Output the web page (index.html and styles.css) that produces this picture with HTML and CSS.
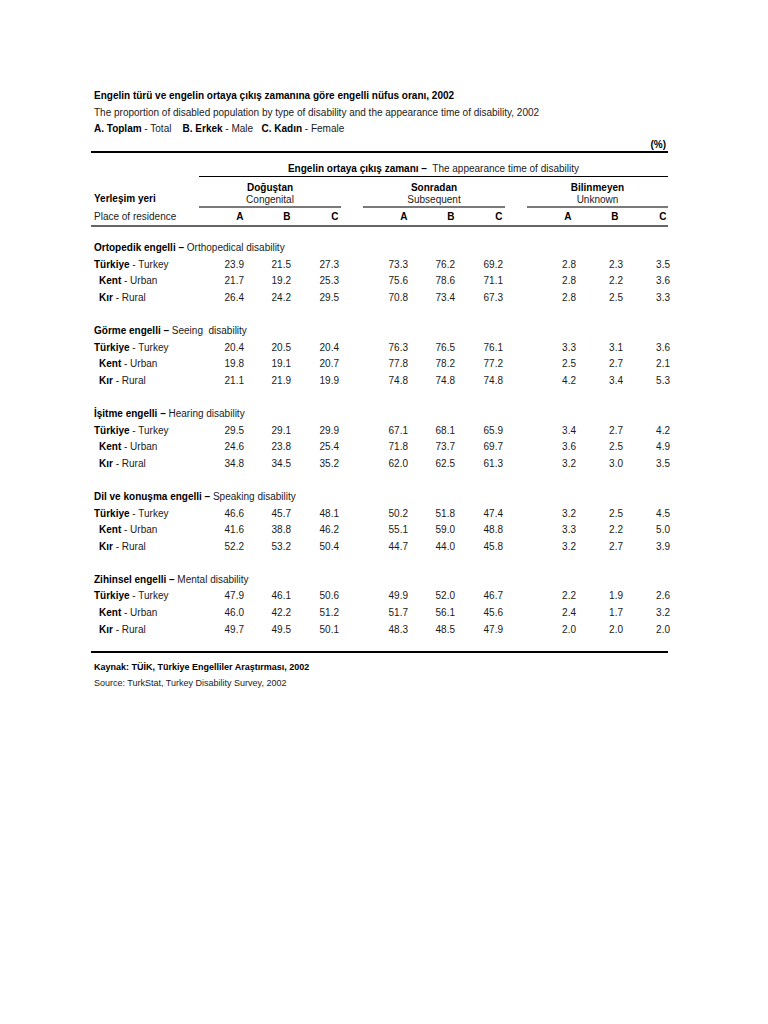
FILE: index.html
```html
<!DOCTYPE html>
<html lang="tr">
<head>
<meta charset="utf-8">
<title>Engelli nüfus oranı, 2002</title>
<link rel="stylesheet" href="styles.css">
</head>
<body>
<div class="page">
  <div class="intro">
    <div class="title">Engelin türü ve engelin ortaya çıkış zamanına göre engelli nüfus oranı, 2002</div>
    <div>The proportion of disabled population by type of disability and the appearance time of disability, 2002</div>
    <div><b>A. Toplam</b> - Total &nbsp;&nbsp; <b>B. Erkek</b> - Male &nbsp; <b>C. Kadın</b> - Female</div>
  </div>
  <div class="unit">(%)</div>

  <div class="table">
    <div class="super"><b>Engelin ortaya çıkış zamanı –</b>&nbsp; The appearance time of disability</div>

    <div class="row hgroups">
      <div class="lab"><b>Yerleşim yeri</b></div>
      <div class="grp"><b>Doğuştan</b><span>Congenital</span></div>
      <div class="grp"><b>Sonradan</b><span>Subsequent</span></div>
      <div class="grp"><b>Bilinmeyen</b><span>Unknown</span></div>
    </div>

    <div class="row hletters">
      <div class="lab">Place of residence</div>
      <div class="g"><b>A</b><b>B</b><b>C</b></div>
      <div class="g"><b>A</b><b>B</b><b>C</b></div>
      <div class="g"><b>A</b><b>B</b><b>C</b></div>
    </div>

    <div class="tbody">
      <div class="section">
        <div class="sec-title"><b>Ortopedik engelli –</b> Orthopedical disability</div>
        <div class="row"><div class="lab"><b>Türkiye</b> - Turkey</div><div class="g v"><span>23.9</span><span>21.5</span><span>27.3</span></div><div class="g v"><span>73.3</span><span>76.2</span><span>69.2</span></div><div class="g v g3"><span>2.8</span><span>2.3</span><span>3.5</span></div></div>
        <div class="row"><div class="lab sub"><b>Kent</b> - Urban</div><div class="g v"><span>21.7</span><span>19.2</span><span>25.3</span></div><div class="g v"><span>75.6</span><span>78.6</span><span>71.1</span></div><div class="g v g3"><span>2.8</span><span>2.2</span><span>3.6</span></div></div>
        <div class="row"><div class="lab sub"><b>Kır</b> - Rural</div><div class="g v"><span>26.4</span><span>24.2</span><span>29.5</span></div><div class="g v"><span>70.8</span><span>73.4</span><span>67.3</span></div><div class="g v g3"><span>2.8</span><span>2.5</span><span>3.3</span></div></div>
      </div>

      <div class="section">
        <div class="sec-title"><b>Görme engelli –</b> Seeing &nbsp;disability</div>
        <div class="row"><div class="lab"><b>Türkiye</b> - Turkey</div><div class="g v"><span>20.4</span><span>20.5</span><span>20.4</span></div><div class="g v"><span>76.3</span><span>76.5</span><span>76.1</span></div><div class="g v g3"><span>3.3</span><span>3.1</span><span>3.6</span></div></div>
        <div class="row"><div class="lab sub"><b>Kent</b> - Urban</div><div class="g v"><span>19.8</span><span>19.1</span><span>20.7</span></div><div class="g v"><span>77.8</span><span>78.2</span><span>77.2</span></div><div class="g v g3"><span>2.5</span><span>2.7</span><span>2.1</span></div></div>
        <div class="row"><div class="lab sub"><b>Kır</b> - Rural</div><div class="g v"><span>21.1</span><span>21.9</span><span>19.9</span></div><div class="g v"><span>74.8</span><span>74.8</span><span>74.8</span></div><div class="g v g3"><span>4.2</span><span>3.4</span><span>5.3</span></div></div>
      </div>

      <div class="section">
        <div class="sec-title"><b>İşitme engelli –</b> Hearing disability</div>
        <div class="row"><div class="lab"><b>Türkiye</b> - Turkey</div><div class="g v"><span>29.5</span><span>29.1</span><span>29.9</span></div><div class="g v"><span>67.1</span><span>68.1</span><span>65.9</span></div><div class="g v g3"><span>3.4</span><span>2.7</span><span>4.2</span></div></div>
        <div class="row"><div class="lab sub"><b>Kent</b> - Urban</div><div class="g v"><span>24.6</span><span>23.8</span><span>25.4</span></div><div class="g v"><span>71.8</span><span>73.7</span><span>69.7</span></div><div class="g v g3"><span>3.6</span><span>2.5</span><span>4.9</span></div></div>
        <div class="row"><div class="lab sub"><b>Kır</b> - Rural</div><div class="g v"><span>34.8</span><span>34.5</span><span>35.2</span></div><div class="g v"><span>62.0</span><span>62.5</span><span>61.3</span></div><div class="g v g3"><span>3.2</span><span>3.0</span><span>3.5</span></div></div>
      </div>

      <div class="section">
        <div class="sec-title"><b>Dil ve konuşma engelli –</b> Speaking disability</div>
        <div class="row"><div class="lab"><b>Türkiye</b> - Turkey</div><div class="g v"><span>46.6</span><span>45.7</span><span>48.1</span></div><div class="g v"><span>50.2</span><span>51.8</span><span>47.4</span></div><div class="g v g3"><span>3.2</span><span>2.5</span><span>4.5</span></div></div>
        <div class="row"><div class="lab sub"><b>Kent</b> - Urban</div><div class="g v"><span>41.6</span><span>38.8</span><span>46.2</span></div><div class="g v"><span>55.1</span><span>59.0</span><span>48.8</span></div><div class="g v g3"><span>3.3</span><span>2.2</span><span>5.0</span></div></div>
        <div class="row"><div class="lab sub"><b>Kır</b> - Rural</div><div class="g v"><span>52.2</span><span>53.2</span><span>50.4</span></div><div class="g v"><span>44.7</span><span>44.0</span><span>45.8</span></div><div class="g v g3"><span>3.2</span><span>2.7</span><span>3.9</span></div></div>
      </div>

      <div class="section">
        <div class="sec-title"><b>Zihinsel engelli –</b> Mental disability</div>
        <div class="row"><div class="lab"><b>Türkiye</b> - Turkey</div><div class="g v"><span>47.9</span><span>46.1</span><span>50.6</span></div><div class="g v"><span>49.9</span><span>52.0</span><span>46.7</span></div><div class="g v g3"><span>2.2</span><span>1.9</span><span>2.6</span></div></div>
        <div class="row"><div class="lab sub"><b>Kent</b> - Urban</div><div class="g v"><span>46.0</span><span>42.2</span><span>51.2</span></div><div class="g v"><span>51.7</span><span>56.1</span><span>45.6</span></div><div class="g v g3"><span>2.4</span><span>1.7</span><span>3.2</span></div></div>
        <div class="row"><div class="lab sub"><b>Kır</b> - Rural</div><div class="g v"><span>49.7</span><span>49.5</span><span>50.1</span></div><div class="g v"><span>48.3</span><span>48.5</span><span>47.9</span></div><div class="g v g3"><span>2.0</span><span>2.0</span><span>2.0</span></div></div>
      </div>
    </div>
  </div>

  <div class="foot">
    <div><b>Kaynak: TÜİK, Türkiye Engelliler Araştırması, 2002</b></div>
    <div>Source: TurkStat, Turkey Disability Survey, 2002</div>
  </div>
</div>
</body>
</html>
```

FILE: styles.css
```css
html, body {
  margin: 0;
  padding: 0;
  background: #fff;
}

body {
  font-family: "Liberation Sans", Arial, sans-serif;
  font-size: 10px;
  color: #1a1a1a;
}

b {
  font-weight: bold;
  color: #000;
}

.page {
  width: 577px;
  padding: 88px 0 0 91px;
}

.intro {
  padding-left: 3px;
  line-height: 16.5px;
}

.title {
  font-weight: bold;
  color: #000;
}

.unit {
  text-align: right;
  padding-right: 2px;
  line-height: 13.5px;
  font-weight: bold;
  color: #000;
}

.table {
  border-top: 2px solid #000;
  border-bottom: 2px solid #000;
}

.super {
  margin-left: 108px;
  padding-top: 9px;
  line-height: 14px;
  text-align: center;
  border-bottom: 1px solid #000;
  white-space: nowrap;
}

.row {
  display: grid;
  grid-template-columns: 86px 142px 142px 141px;
  column-gap: 22px;
}

.lab {
  padding-left: 3px;
  white-space: nowrap;
}

.lab.sub {
  padding-left: 8px;
}

.hgroups .lab {
  align-self: end;
  padding-bottom: 3px;
  line-height: 12.5px;
}

.grp {
  display: flex;
  flex-direction: column;
  align-items: center;
  padding: 5px 0 0;
  line-height: 12px;
  border-bottom: 2px solid #7a7a7a;
}

.hletters {
  padding: 2px 0 2px;
  line-height: 13px;
  border-bottom: 2px solid #666;
}

.g {
  display: grid;
  grid-template-columns: 47px 47px 48px;
}

.g > b {
  text-align: right;
  padding-right: 2.5px;
}

.g3 {
  grid-template-columns: 47px 47px 47px;
}

.v > span {
  text-align: right;
  padding-right: 2px;
}

.g3.v > span {
  padding-right: 0;
  margin-right: -2px;
}

.tbody {
  padding: 13px 0 12.5px;
  line-height: 16.6px;
}

.section + .section {
  margin-top: 16.6px;
}

.sec-title {
  padding-left: 3px;
  white-space: nowrap;
}

.foot {
  padding: 6.5px 0 0 3px;
  font-size: 9px;
  line-height: 16px;
}
```
